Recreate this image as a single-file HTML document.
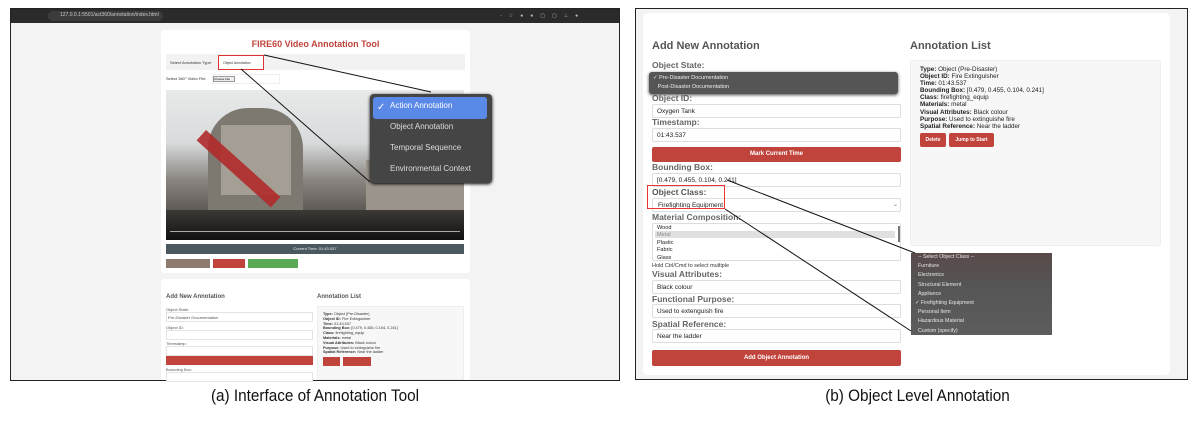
<!DOCTYPE html>
<html><head><meta charset="utf-8">
<style>
*{box-sizing:border-box;margin:0;padding:0}
body{width:1203px;height:432px;background:#fff;position:relative;overflow:hidden;font-family:"Liberation Sans",Arial,sans-serif}
.a{position:absolute}
.lbl{position:absolute;font-weight:bold;color:#666;font-size:8.5px}
.inp{position:absolute;background:#fff;border:1px solid #ddd;border-radius:2px;font-size:6.5px;color:#222;padding:3px 4px;line-height:7px}
.btn{position:absolute;background:#c0443b;color:#fff;font-weight:bold;text-align:center;border-radius:2px}
.sl{position:absolute;font-size:4px;color:#555}
.si{position:absolute;background:#fff;border:1px solid #e4e4e4;height:10px}
</style></head><body>

<!-- LEFT PANEL -->
<div class="a" style="left:10px;top:8px;width:610px;height:373px;border:1px solid #222;background:#f3f3f3"></div>
<div class="a" style="left:11px;top:9px;width:608px;height:14px;background:#2b2b2b"></div>
<div class="a" style="left:48px;top:11px;width:115px;height:10px;background:#3c3c3c;border-radius:5px"></div>
<div class="a" style="left:60px;top:12px;font-size:5px;color:#ccc">127.0.0.1:5501/act360/annotation/index.html</div>
<div class="a" style="left:500px;top:13px;width:110px;height:4px;font-size:5px;color:#bbb;letter-spacing:7px">◦☆●●▢▢⊥●</div>

<!-- card1 -->
<div class="a" style="left:161px;top:30px;width:309px;height:243px;background:#fff;border-radius:3px"></div>
<div class="a" style="left:161px;top:39px;width:309px;text-align:center;font-size:9px;font-weight:bold;color:#c0443b">FIRE60 Video Annotation Tool</div>
<div class="a" style="left:166px;top:54px;width:299px;height:16px;background:#f2f2f2"></div>
<div class="a" style="left:170px;top:60px;font-size:4px;color:#333">Select Annotation Type:</div>
<div class="a" style="left:218px;top:55px;width:46px;height:15px;border:1px solid #d33;background:#fff"></div>
<div class="a" style="left:223px;top:61px;font-size:3.5px;color:#333">Object Annotation</div>
<div class="a" style="left:166px;top:76px;font-size:4px;color:#333">Select 360° Video File:</div>
<div class="a" style="left:212px;top:74px;width:68px;height:10px;border:1px solid #eee"></div>
<div class="a" style="left:213px;top:76px;width:22px;height:6px;background:#eee;border:1px solid #999;font-size:3px">Choose File</div>
<!-- video -->
<div class="a" style="left:166px;top:90px;width:298px;height:150px;background:linear-gradient(180deg,#e8eaea 0%,#d8dbdc 35%,#8a8580 60%,#5f5a55 80%,#2e2c2a 100%);overflow:hidden">
 <div class="a" style="left:42px;top:18px;width:95px;height:110px;background:#7d7870;border-radius:40px 40px 0 0"></div>
 <div class="a" style="left:55px;top:35px;width:70px;height:70px;background:#a49e94"></div>
 <div class="a" style="left:40px;top:40px;width:100px;height:14px;background:#b02a2a;transform:rotate(42deg);transform-origin:0 0;opacity:.9"></div>
 <div class="a" style="left:0;top:120px;width:298px;height:30px;background:linear-gradient(180deg,#3c3936,#111)"></div>
 <div class="a" style="left:200px;top:70px;width:98px;height:50px;background:#9a948b"></div>
 <div class="a" style="left:4px;top:141px;width:290px;height:1px;background:#aaa"></div>
</div>
<div class="a" style="left:166px;top:244px;width:298px;height:10px;background:#4a5960;color:#eee;font-size:4px;text-align:center;line-height:10px">Current Time: 01:43.537</div>
<div class="a" style="left:166px;top:259px;width:44px;height:9px;background:#8d7b6f"></div>
<div class="a" style="left:213px;top:259px;width:32px;height:9px;background:#c0443b"></div>
<div class="a" style="left:248px;top:259px;width:50px;height:9px;background:#5aaa55"></div>
<!-- popup -->
<div class="a" style="left:370px;top:94px;width:122px;height:89px;background:#454545;border-radius:4px;box-shadow:0 1px 3px #000"></div>
<div class="a" style="left:373px;top:97px;width:114px;height:22px;background:#5b89e8;border-radius:3px"></div>
<div class="a" style="left:377px;top:102px;font-size:10px;color:#fff">✓</div>
<div class="a" style="left:390px;top:101px;font-size:8px;color:#fff">Action Annotation</div>
<div class="a" style="left:390px;top:122px;font-size:8px;color:#ddd">Object Annotation</div>
<div class="a" style="left:390px;top:143px;font-size:8px;color:#ddd">Temporal Sequence</div>
<div class="a" style="left:390px;top:164px;font-size:8px;color:#ddd">Environmental Context</div>

<!-- card2 -->
<div class="a" style="left:161px;top:279px;width:309px;height:101px;background:#fff;border-radius:3px"></div>
<div class="a" style="left:166px;top:294px;font-size:6px;font-weight:bold;color:#555">Add New Annotation</div>
<div class="a" style="left:317px;top:294px;font-size:6px;font-weight:bold;color:#555">Annotation List</div>
<div class="sl" style="left:166px;top:307px">Object State:</div>
<div class="si" style="left:166px;top:312px;width:147px"></div>
<div class="sl" style="left:168px;top:315px">Pre-Disaster Documentation</div>
<div class="sl" style="left:166px;top:325px">Object ID:</div>
<div class="si" style="left:166px;top:330px;width:147px"></div>
<div class="sl" style="left:166px;top:341px">Timestamp:</div>
<div class="si" style="left:166px;top:346px;width:147px"></div>
<div class="a" style="left:166px;top:356px;width:147px;height:9px;background:#c0443b"></div>
<div class="sl" style="left:166px;top:367px">Bounding Box:</div>
<div class="si" style="left:166px;top:372px;width:147px"></div>
<div class="a" style="left:317px;top:306px;width:147px;height:74px;background:#f7f7f7;border:1px solid #eee"></div>
<div class="a" style="left:323px;top:312px;font-size:3.8px;line-height:4.8px;color:#333"><b>Type:</b> Object (Pre-Disaster)<br><b>Object ID:</b> Fire Extinguisher<br><b>Time:</b> 01:43.537<br><b>Bounding Box:</b> [0.479, 0.455, 0.104, 0.241]<br><b>Class:</b> firefighting_equip<br><b>Materials:</b> metal<br><b>Visual Attributes:</b> Black colour<br><b>Purpose:</b> Used to extinguishe fire<br><b>Spatial Reference:</b> Near the ladder</div>
<div class="a" style="left:323px;top:357px;width:17px;height:9px;background:#c0443b"></div>
<div class="a" style="left:343px;top:357px;width:28px;height:9px;background:#c0443b"></div>

<svg class="a" style="left:0;top:0" width="620" height="400"><line x1="264" y1="55" x2="431" y2="92" stroke="#111" stroke-width="1"/><line x1="241" y1="69" x2="370" y2="182" stroke="#111" stroke-width="1"/></svg>

<div class="a" style="left:10px;top:386px;width:610px;text-align:center;font-size:17px;color:#111;transform:scaleX(0.9)">(a) Interface of Annotation Tool</div>

<!-- RIGHT PANEL -->
<div class="a" style="left:635px;top:8px;width:553px;height:372px;border:1px solid #222;background:#f3f3f3"></div>
<div class="a" style="left:643px;top:13px;width:527px;height:362px;background:#fff;border-radius:5px"></div>
<div class="a" style="left:652px;top:40px;font-size:11px;font-weight:bold;color:#555">Add New Annotation</div>
<div class="a" style="left:910px;top:40px;font-size:11px;font-weight:bold;color:#555">Annotation List</div>
<div class="lbl" style="left:652px;top:60px">Object State:</div>
<div class="lbl" style="left:652px;top:93px">Object ID:</div>
<div class="inp" style="left:652px;top:104px;width:249px;height:14px">Oxygen Tank</div>
<div class="lbl" style="left:652px;top:117px">Timestamp:</div>
<div class="inp" style="left:652px;top:128px;width:249px;height:14px">01:43.537</div>
<div class="btn" style="left:652px;top:147px;width:249px;height:15px;font-size:6px;line-height:15px">Mark Current Time</div>
<div class="lbl" style="left:652px;top:162px">Bounding Box:</div>
<div class="inp" style="left:652px;top:173px;width:249px;height:14px">[0.479, 0.455, 0.104, 0.241]</div>
<div class="lbl" style="left:652px;top:187px;color:#555">Object Class:</div>
<div class="inp" style="left:652px;top:198px;width:249px;height:14px;padding-left:5px">Firefighting Equipment</div>
<div class="a" style="left:893px;top:201px;font-size:6px;color:#777">⌄</div>
<div class="a" style="left:647px;top:185px;width:78px;height:24px;border:1px solid #e33"></div>
<div class="lbl" style="left:652px;top:212px">Material Composition:</div>
<div class="inp" style="left:652px;top:223px;width:249px;height:38px;padding:1px 4px;line-height:7.4px;font-size:5.6px">Wood<br>Metal<br>Plastic<br>Fabric<br>Glass</div>
<div class="a" style="left:655px;top:231px;width:240px;height:7px;background:#ccc;opacity:.6"></div>
<div class="a" style="left:898px;top:226px;width:2px;height:16px;background:#777"></div>
<div class="a" style="left:652px;top:263px;font-size:5.5px;color:#333">Hold Ctrl/Cmd to select multiple</div>
<div class="lbl" style="left:652px;top:269px">Visual Attributes:</div>
<div class="inp" style="left:652px;top:280px;width:249px;height:14px">Black colour</div>
<div class="lbl" style="left:652px;top:294px">Functional Purpose:</div>
<div class="inp" style="left:652px;top:304px;width:249px;height:14px">Used to extenguish fire</div>
<div class="lbl" style="left:652px;top:319px">Spatial Reference:</div>
<div class="inp" style="left:652px;top:329px;width:249px;height:14px">Near the ladder</div>
<div class="btn" style="left:652px;top:350px;width:249px;height:16px;font-size:6px;line-height:16px">Add Object Annotation</div>
<!-- state dropdown -->
<div class="a" style="left:649px;top:72px;width:249px;height:22px;background:#555;border-radius:3px;box-shadow:0 1px 3px #444;font-size:5.5px;color:#eee;padding:2px 4px;line-height:9px">✓ Pre-Disaster Documentation<br>&nbsp;&nbsp;&nbsp;Post-Disaster Documentation</div>
<!-- list -->
<div class="a" style="left:910px;top:60px;width:251px;height:186px;background:#f7f7f7;border:1px solid #eee;border-radius:3px"></div>
<div class="a" style="left:920px;top:66px;font-size:6.3px;line-height:7.1px;color:#222"><b>Type:</b> Object (Pre-Disaster)<br><b>Object ID:</b> Fire Extinguisher<br><b>Time:</b> 01:43.537<br><b>Bounding Box:</b> [0.479, 0.455, 0.104, 0.241]<br><b>Class:</b> firefighting_equip<br><b>Materials:</b> metal<br><b>Visual Attributes:</b> Black colour<br><b>Purpose:</b> Used to extinguishe fire<br><b>Spatial Reference:</b> Near the ladder</div>
<div class="btn" style="left:920px;top:133px;width:26px;height:14px;font-size:5px;line-height:14px">Delete</div>
<div class="btn" style="left:949px;top:133px;width:45px;height:14px;font-size:5px;line-height:14px">Jump to Start</div>
<!-- class popup -->
<div class="a" style="left:911px;top:253px;width:141px;height:82px;background:linear-gradient(180deg,#5a4a4a,#555 40%,#5d5d5d);font-size:5.3px;color:#e6e6e6;line-height:9.2px;padding:0 4px">&nbsp;&nbsp;-- Select Object Class --<br>&nbsp;&nbsp;Furniture<br>&nbsp;&nbsp;Electronics<br>&nbsp;&nbsp;Structural Element<br>&nbsp;&nbsp;Appliance<br>✓ Firefighting Equipment<br>&nbsp;&nbsp;Personal Item<br>&nbsp;&nbsp;Hazardous Material<br>&nbsp;&nbsp;Custom (specify)</div>
<svg class="a" style="left:0;top:0" width="1203" height="400"><line x1="727" y1="180" x2="915" y2="253" stroke="#111" stroke-width="1"/><line x1="725" y1="209" x2="911" y2="331" stroke="#111" stroke-width="1"/></svg>

<div class="a" style="left:635px;top:386px;width:565px;text-align:center;font-size:17px;color:#111;transform:scaleX(0.9)">(b) Object Level Annotation</div>
</body></html>
